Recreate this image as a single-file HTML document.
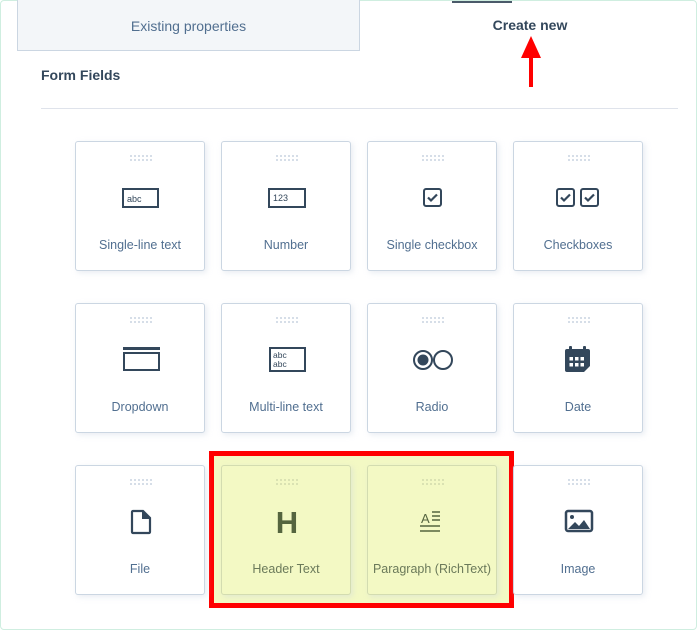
<!DOCTYPE html>
<html><head><style>
body{margin:0;width:700px;height:634px;background:#fff;font-family:"Liberation Sans",sans-serif;position:relative;overflow:hidden;color:#33475b}
.outer{position:absolute;left:0;top:0;width:697px;height:630px;border:1.5px solid #cfeee0;border-radius:4px;box-sizing:border-box}
.tab1{position:absolute;left:17px;top:-1px;width:343px;height:52px;background:#f3f6f9;border:1px solid #cbd6e2;box-sizing:border-box;text-align:center;line-height:52px;font-size:14px;color:#516f90}
.tab2{position:absolute;left:440px;top:17px;width:180px;text-align:center;font-size:14px;font-weight:bold;color:#33475b}
.ff{position:absolute;left:41px;top:67px;font-size:14px;font-weight:bold}
.hr{position:absolute;left:41px;top:108px;width:637px;height:1px;background:#dfe3eb}
.card{position:absolute;width:130px;height:130px;border:1px solid #cbd6e2;border-radius:3px;box-sizing:border-box;background:#fff;box-shadow:2px 2px 6px rgba(200,210,225,.4)}
.card .dots{position:absolute;left:53px;top:12px;width:24px;height:9px;background-image:radial-gradient(circle,#cbd6e2 0.9px,transparent 1.1px);background-size:4px 4px}
.card .lb{position:absolute;left:0;right:0;top:96px;text-align:center;font-size:12.5px;color:#516f90}
.card svg{position:absolute;left:35px;top:36px}
.hl{background:#f3f9c4;border-color:#d3dcb0}
.hl .lb{color:#6b7a5a}
.hl .dots{background-image:radial-gradient(circle,#d4dcae 0.9px,transparent 1.1px)}
.red{position:absolute;left:209px;top:451px;width:305px;height:157px;border:5px solid #f00;box-sizing:border-box;background:#f3f9c4}
</style></head><body>
<div class="outer"></div>
<div style="position:absolute;left:452px;top:1px;width:60px;height:2px;background:#4a5a6a"></div>
<div class="tab1">Existing properties</div>
<div class="tab2">Create new</div>
<svg style="position:absolute;left:517px;top:36px" width="28" height="52"><polygon points="14,0 24,22 4,22" fill="#f00"/><rect x="12" y="20" width="4" height="31" fill="#f00"/></svg>
<div class="ff">Form Fields</div>
<div class="hr"></div>
<div class="red"></div>

<div class="card" style="left:75px;top:141px"><div class="dots"></div>
<svg width="60" height="40"><rect x="12" y="11" width="35" height="18" fill="none" stroke="#33475b" stroke-width="2"/><text x="16" y="24" font-size="9" fill="#33475b" font-family="Liberation Sans">abc</text></svg>
<div class="lb">Single-line text</div></div>
<div class="card" style="left:221px;top:141px"><div class="dots"></div>
<svg width="60" height="40"><rect x="12" y="11" width="36" height="18" fill="none" stroke="#33475b" stroke-width="2"/><text x="16" y="23" font-size="9" fill="#33475b" font-family="Liberation Sans">123</text></svg>
<div class="lb">Number</div></div>
<div class="card" style="left:367px;top:141px"><div class="dots"></div>
<svg width="60" height="40"><rect x="21" y="11" width="17" height="17" rx="2" fill="none" stroke="#33475b" stroke-width="2"/><path d="M25 19.5l3 3 6-6" fill="none" stroke="#33475b" stroke-width="2.2"/></svg>
<div class="lb">Single checkbox</div></div>
<div class="card" style="left:513px;top:141px"><div class="dots"></div>
<svg width="60" height="40"><rect x="8" y="11" width="17" height="17" rx="2" fill="none" stroke="#33475b" stroke-width="2"/><path d="M12 19.5l3 3 6-6" fill="none" stroke="#33475b" stroke-width="2.2"/><rect x="32" y="11" width="17" height="17" rx="2" fill="none" stroke="#33475b" stroke-width="2"/><path d="M36 19.5l3 3 6-6" fill="none" stroke="#33475b" stroke-width="2.2"/></svg>
<div class="lb">Checkboxes</div></div>

<div class="card" style="left:75px;top:303px"><div class="dots"></div>
<svg width="60" height="40"><rect x="12" y="7" width="37" height="3" fill="#33475b"/><rect x="13" y="13" width="35" height="17" fill="none" stroke="#33475b" stroke-width="2"/></svg>
<div class="lb">Dropdown</div></div>
<div class="card" style="left:221px;top:303px"><div class="dots"></div>
<svg width="60" height="40"><rect x="13" y="8" width="35" height="23" fill="none" stroke="#33475b" stroke-width="2"/><text x="16" y="18" font-size="8.5" fill="#33475b" font-family="Liberation Sans">abc</text><text x="16" y="27" font-size="8.5" fill="#33475b" font-family="Liberation Sans">abc</text></svg>
<div class="lb">Multi-line text</div></div>
<div class="card" style="left:367px;top:303px"><div class="dots"></div>
<svg width="60" height="40"><circle cx="20" cy="20" r="9" fill="none" stroke="#33475b" stroke-width="2"/><circle cx="20" cy="20" r="5.5" fill="#33475b"/><circle cx="40" cy="20" r="9" fill="none" stroke="#33475b" stroke-width="2"/></svg>
<div class="lb">Radio</div></div>
<div class="card" style="left:513px;top:303px"><div class="dots"></div>
<svg width="60" height="40"><rect x="20" y="6" width="3" height="6" rx="1" fill="#33475b"/><rect x="34" y="6" width="3" height="6" rx="1" fill="#33475b"/><path d="M18 9h21a2 2 0 0 1 2 2v15l-6 6h-17a2 2 0 0 1-2-2v-19a2 2 0 0 1 2-2z" fill="#33475b"/><g fill="#fff"><rect x="20.5" y="17" width="3.5" height="3.5"/><rect x="26" y="17" width="3.5" height="3.5"/><rect x="31.5" y="17" width="3.5" height="3.5"/><rect x="20.5" y="23" width="3.5" height="3.5"/><rect x="26" y="23" width="3.5" height="3.5"/><rect x="31.5" y="23" width="3.5" height="3.5"/></g></svg>
<div class="lb">Date</div></div>

<div class="card" style="left:75px;top:465px"><div class="dots"></div>
<svg width="60" height="40"><path d="M22 9h10l7 7v14a1 1 0 0 1-1 1h-16a1 1 0 0 1-1-1v-20a1 1 0 0 1 1-1z" fill="none" stroke="#33475b" stroke-width="2.2"/><path d="M31 9v8h8z" fill="#33475b"/></svg>
<div class="lb">File</div></div>
<div class="card hl" style="left:221px;top:465px"><div class="dots"></div>
<svg width="60" height="40"><text x="30" y="31" text-anchor="middle" font-size="31" font-weight="bold" fill="#55653f" font-family="Liberation Sans">H</text></svg>
<div class="lb">Header Text</div></div>
<div class="card hl" style="left:367px;top:465px"><div class="dots"></div>
<svg width="60" height="40"><text x="18" y="21" font-size="13" fill="#55653f" font-family="Liberation Sans">A</text><g stroke="#55653f" stroke-width="1.6"><path d="M29 10h8M29 14h8M29 18h8M17 24h20M17 29h20"/></g></svg>
<div class="lb">Paragraph (RichText)</div></div>
<div class="card" style="left:513px;top:465px"><div class="dots"></div>
<svg width="60" height="40"><rect x="17" y="9" width="26" height="20" rx="2" fill="none" stroke="#33475b" stroke-width="2.5"/><circle cx="23" cy="15" r="2" fill="#33475b"/><path d="M19 27l7-7 4 4 5-6 6 9z" fill="#33475b"/></svg>
<div class="lb">Image</div></div>
</body></html>
